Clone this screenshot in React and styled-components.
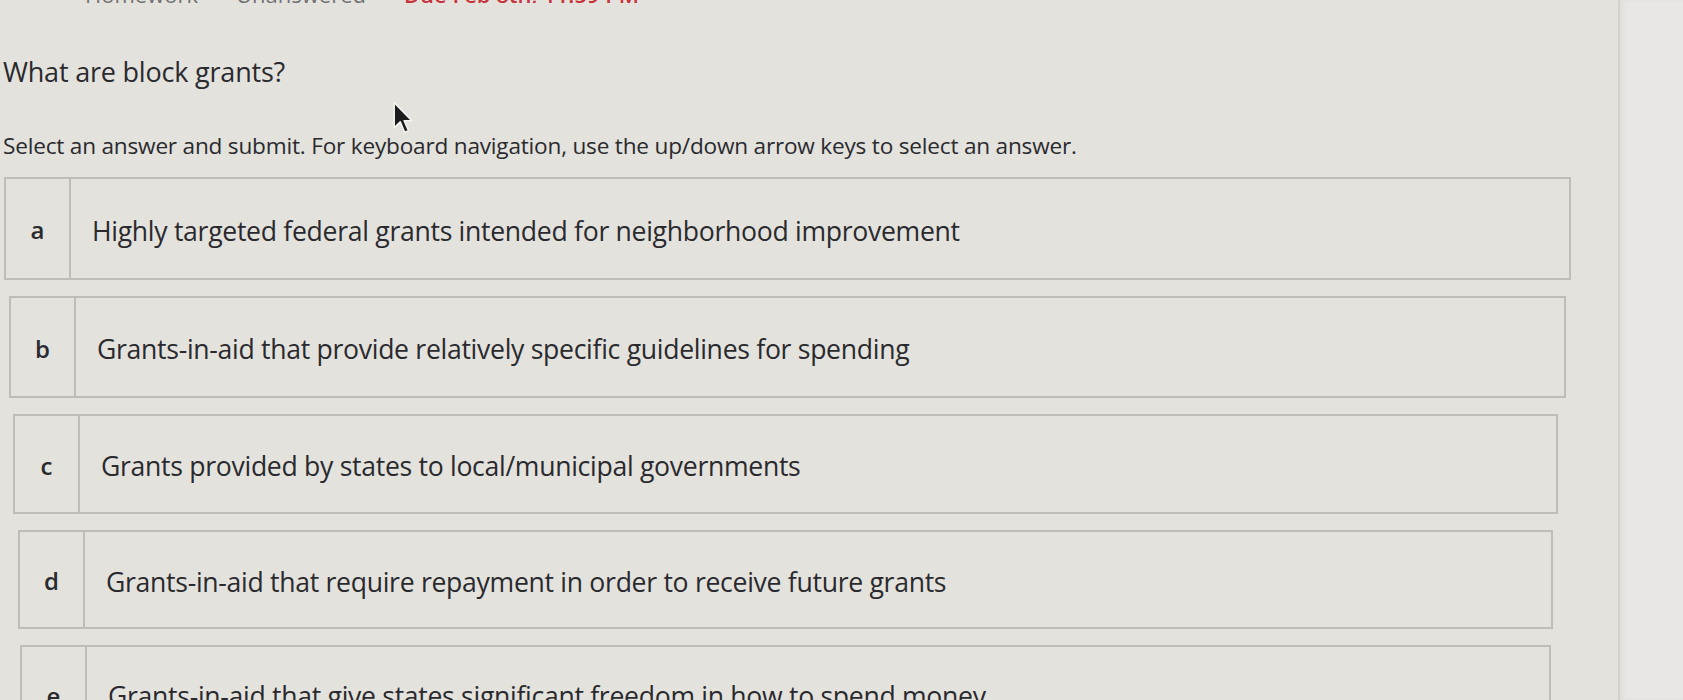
import React from "react";
import styled, { createGlobalStyle } from "styled-components";

const GlobalStyle = createGlobalStyle`
  html, body {
    margin: 0;
    padding: 0;
    background: #e3e2dd;
    overflow: hidden;
  }
  * {
    box-sizing: border-box;
  }
`;

const Frame = styled.div`
  display: flex;
  width: 1683px;
  height: 700px;
  overflow: hidden;
  font-family: "Open Sans", "Noto Sans", sans-serif;
  color: #2a2a2e;
`;

const Screen = styled.div`
  position: relative;
  flex: 0 0 1620px;
  padding-left: 3px;
  background: #e3e2dd;
  border-right: 2px solid #d3d1cc;
`;

const Bezel = styled.div`
  flex: 1;
  background: #e8e7e3;
  box-shadow: inset 3px 0 4px rgba(0, 0, 0, 0.04);
`;

// only the bottom edge of the assignment status line is on screen
const StatusBar = styled.div`
  display: flex;
  align-items: flex-end;
  gap: 38px;
  height: 3px;
  padding-left: 82px;
  overflow: hidden;
  font-size: 22px;
  line-height: 1;
`;

const StatusItem = styled.span`
  flex: none;
  margin-bottom: -2px;
  color: ${props => (props.due ? "#c8333b" : "#727274")};
  font-weight: ${props => (props.due ? 600 : 400)};
`;

const Question = styled.h1`
  margin: 52px 0 0;
  font-size: 27px;
  font-weight: 400;
  line-height: 34px;
  letter-spacing: -0.2px;
`;

const Hint = styled.p`
  margin: 42px 0 0;
  font-size: 22.6px;
  line-height: 30px;
  letter-spacing: -0.2px;
`;

const Options = styled.div`
  display: flex;
  flex-direction: column;
  gap: 16px;
  margin-top: 16px;
`;

const Option = styled.div`
  display: flex;
  height: ${props => props.height}px;
  margin-left: ${props => props.left}px;
  margin-right: ${props => props.right}px;
  border: 2px solid #bebdb8;
`;

const OptionKey = styled.div`
  display: flex;
  align-items: center;
  justify-content: center;
  flex: 0 0 65px;
  border-right: 2px solid #bebdb8;
  font-size: 24px;
  font-weight: 600;
  padding-top: 2px;
`;

const OptionText = styled.div`
  display: flex;
  align-items: center;
  padding: 4px 0 0 21px;
  font-size: 26.6px;
  letter-spacing: -0.3px;
`;

const Cursor = styled.svg`
  position: absolute;
  left: 392px;
  top: 100px;
  width: 22px;
  height: 36px;
  filter: blur(0.4px);
`;

const answers = [
  { key: "a", text: "Highly targeted federal grants intended for neighborhood improvement", height: 103, left: 1, right: 47 },
  { key: "b", text: "Grants-in-aid that provide relatively specific guidelines for spending", height: 102, left: 6, right: 52 },
  { key: "c", text: "Grants provided by states to local/municipal governments", height: 100, left: 10, right: 60 },
  { key: "d", text: "Grants-in-aid that require repayment in order to receive future grants", height: 99, left: 15, right: 65 },
  { key: "e", text: "Grants-in-aid that give states significant freedom in how to spend money", height: 98, left: 17, right: 67 },
];

const App = () => (
  <>
    <GlobalStyle />
    <Frame>
      <Screen>
        <StatusBar>
          <StatusItem>Homework</StatusItem>
          <StatusItem>Unanswered</StatusItem>
          <StatusItem due>Due Feb 8th, 11:59 PM</StatusItem>
        </StatusBar>
        <Question>What are block grants?</Question>
        <Hint>
          Select an answer and submit. For keyboard navigation, use the up/down arrow keys to select an answer.
        </Hint>
        <Options>
          {answers.map(a => (
            <Option key={a.key} height={a.height} left={a.left} right={a.right}>
              <OptionKey>{a.key}</OptionKey>
              <OptionText>{a.text}</OptionText>
            </Option>
          ))}
        </Options>
        <Cursor viewBox="0 0 20 32">
          <path
            d="M2 2 L2 25 L7.5 19.5 L11.5 29 L15 27.5 L11 18.5 L18 18.5 Z"
            fill="#1c1c1e"
            stroke="#f4f4f2"
            strokeWidth="1.4"
            strokeLinejoin="round"
          />
        </Cursor>
      </Screen>
      <Bezel />
    </Frame>
  </>
);

export default App;
